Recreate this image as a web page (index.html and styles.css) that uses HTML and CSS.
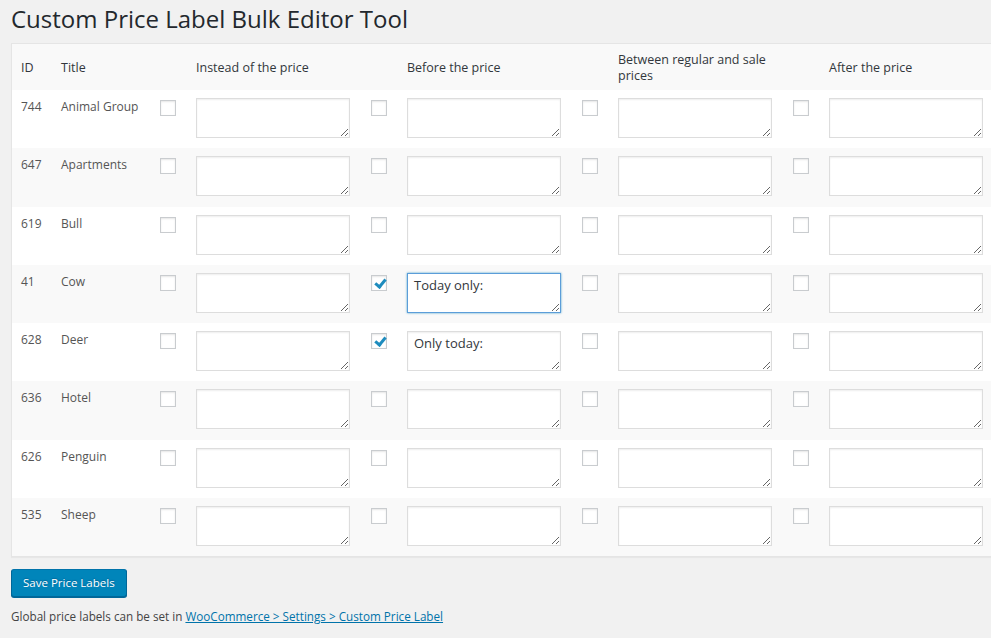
FILE: index.html
```html
<!DOCTYPE html>
<html lang="en">
<head>
  <meta charset="UTF-8" />
  <meta name="viewport" content="width=device-width, initial-scale=1" />
  <title>Custom Price Label Bulk Editor Tool</title>
  <link rel="stylesheet" href="styles.css">
</head>
<body>

  <div class="wrap">
    <h1>Custom Price Label Bulk Editor Tool</h1>

    <form>
      <table class="labels">
        <thead>
          <tr>
            <th class="col-id">ID</th>
            <th class="col-title">Title</th>
            <th class="col-cb"></th>
            <th class="col-text">Instead of the price</th>
            <th class="col-cb"></th>
            <th class="col-text">Before the price</th>
            <th class="col-cb"></th>
            <th class="col-text">Between regular and sale prices</th>
            <th class="col-cb"></th>
            <th class="col-text">After the price</th>
          </tr>
        </thead>
        <tbody>
          <tr>
            <td>744</td><td>Animal Group</td>
            <td><input type="checkbox" class="cb"></td><td><textarea></textarea></td>
            <td><input type="checkbox" class="cb"></td><td><textarea></textarea></td>
            <td><input type="checkbox" class="cb"></td><td><textarea></textarea></td>
            <td><input type="checkbox" class="cb"></td><td><textarea></textarea></td>
          </tr>
          <tr>
            <td>647</td><td>Apartments</td>
            <td><input type="checkbox" class="cb"></td><td><textarea></textarea></td>
            <td><input type="checkbox" class="cb"></td><td><textarea></textarea></td>
            <td><input type="checkbox" class="cb"></td><td><textarea></textarea></td>
            <td><input type="checkbox" class="cb"></td><td><textarea></textarea></td>
          </tr>
          <tr>
            <td>619</td><td>Bull</td>
            <td><input type="checkbox" class="cb"></td><td><textarea></textarea></td>
            <td><input type="checkbox" class="cb"></td><td><textarea></textarea></td>
            <td><input type="checkbox" class="cb"></td><td><textarea></textarea></td>
            <td><input type="checkbox" class="cb"></td><td><textarea></textarea></td>
          </tr>
          <tr>
            <td>41</td><td>Cow</td>
            <td><input type="checkbox" class="cb"></td><td><textarea></textarea></td>
            <td><input type="checkbox" class="cb" checked></td><td><textarea class="is-focus">Today only:</textarea></td>
            <td><input type="checkbox" class="cb"></td><td><textarea></textarea></td>
            <td><input type="checkbox" class="cb"></td><td><textarea></textarea></td>
          </tr>
          <tr>
            <td>628</td><td>Deer</td>
            <td><input type="checkbox" class="cb"></td><td><textarea></textarea></td>
            <td><input type="checkbox" class="cb" checked></td><td><textarea>Only today:</textarea></td>
            <td><input type="checkbox" class="cb"></td><td><textarea></textarea></td>
            <td><input type="checkbox" class="cb"></td><td><textarea></textarea></td>
          </tr>
          <tr>
            <td>636</td><td>Hotel</td>
            <td><input type="checkbox" class="cb"></td><td><textarea></textarea></td>
            <td><input type="checkbox" class="cb"></td><td><textarea></textarea></td>
            <td><input type="checkbox" class="cb"></td><td><textarea></textarea></td>
            <td><input type="checkbox" class="cb"></td><td><textarea></textarea></td>
          </tr>
          <tr>
            <td>626</td><td>Penguin</td>
            <td><input type="checkbox" class="cb"></td><td><textarea></textarea></td>
            <td><input type="checkbox" class="cb"></td><td><textarea></textarea></td>
            <td><input type="checkbox" class="cb"></td><td><textarea></textarea></td>
            <td><input type="checkbox" class="cb"></td><td><textarea></textarea></td>
          </tr>
          <tr>
            <td>535</td><td>Sheep</td>
            <td><input type="checkbox" class="cb"></td><td><textarea></textarea></td>
            <td><input type="checkbox" class="cb"></td><td><textarea></textarea></td>
            <td><input type="checkbox" class="cb"></td><td><textarea></textarea></td>
            <td><input type="checkbox" class="cb"></td><td><textarea></textarea></td>
          </tr>
        </tbody>
      </table>

      <div class="submit">
        <button type="button" class="btn-primary">Save Price Labels</button>
      </div>
    </form>

    <p class="note">Global price labels can be set in <a href="#">WooCommerce &gt; Settings &gt; Custom Price Label</a></p>
  </div>

</body>
</html>
```

FILE: styles.css
```css
/* RESET */
* {
  margin: 0;
  padding: 0;
  box-sizing: border-box;
}

html, body {
  width: 100%;
  height: 100%;
  overflow: hidden;
}

body {
  background: #f1f1f1;
  color: #444;
  font-family: 'Open Sans', sans-serif;
  font-size: 12px;
}

.wrap {
  padding-left: 11px;
}

.wrap h1 {
  font-size: 24px;
  font-weight: 400;
  line-height: 29px;
  color: #23282d;
  padding-top: 4px;
  margin-bottom: 10px;
}

/* TABLE */
.labels {
  width: 984px;
  table-layout: fixed;
  border-collapse: separate;
  border-spacing: 0;
  background: #fff;
  border: 1px solid #e5e5e5;
  box-shadow: 0 1px 1px rgba(0, 0, 0, 0.04);
}

.labels th {
  text-align: left;
  font-weight: 400;
  color: #32373c;
  font-size: 12.5px;
  line-height: 16px;
  padding: 8px 10px 6px;
  vertical-align: middle;
}

.labels thead tr {
  background: #f9f9f9;
}

.labels .col-id { width: 39px; padding-left: 9px; }
.labels .col-title { width: 99px; }
.labels .col-cb { width: 36px; }
.labels .col-text { width: 175px; }

.labels td {
  color: #555;
  line-height: 18px;
  padding: 8px 10px 10.3px;
  vertical-align: top;
}

.labels td:first-child {
  padding-left: 9px;
}

.labels tbody tr:nth-child(even) {
  background: #f9f9f9;
}

.labels textarea {
  display: block;
  width: 154px;
  height: 40px;
  padding: 2px 6px;
  border: 1px solid #ddd;
  box-shadow: inset 0 1px 2px rgba(0, 0, 0, 0.07);
  background: #fff;
  color: #32373c;
  font-family: 'Open Sans', sans-serif;
  font-size: 13px;
  line-height: 18px;
  outline: none;
}

.labels textarea.is-focus {
  border-color: #5b9dd9;
  box-shadow: 0 0 2px rgba(30, 140, 190, 0.8);
}

/* CHECKBOX */
.cb {
  -webkit-appearance: none;
  appearance: none;
  display: block;
  position: relative;
  width: 16px;
  height: 16px;
  margin-top: 2px;
  border: 1px solid #c9cccf;
  background: #fff;
  box-shadow: inset 0 1px 2px rgba(0, 0, 0, 0.1);
  cursor: pointer;
}

.cb:checked::before {
  content: '';
  position: absolute;
  left: 4.5px;
  top: 1px;
  width: 4px;
  height: 8px;
  border: solid #1e8cbe;
  border-width: 0 3px 3px 0;
  transform: rotate(40deg);
}

/* BUTTON */
.submit {
  margin-top: 12px;
}

.btn-primary {
  height: 28px;
  padding: 0 11px;
  background: #0085ba;
  border: 1px solid #0073aa;
  border-color: #0073aa #006799 #006799;
  border-radius: 3px;
  box-shadow: 0 1px 0 #006799;
  color: #fff;
  font-family: 'Open Sans', sans-serif;
  font-size: 11.5px;
  line-height: 26px;
  text-shadow: 0 -1px 1px #006799;
  cursor: pointer;
}

.note {
  margin-top: 10px;
  line-height: 18px;
  font-size: 11.7px;
  color: #444;
}

.note a {
  color: #0073aa;
  text-decoration: underline;
}
```
